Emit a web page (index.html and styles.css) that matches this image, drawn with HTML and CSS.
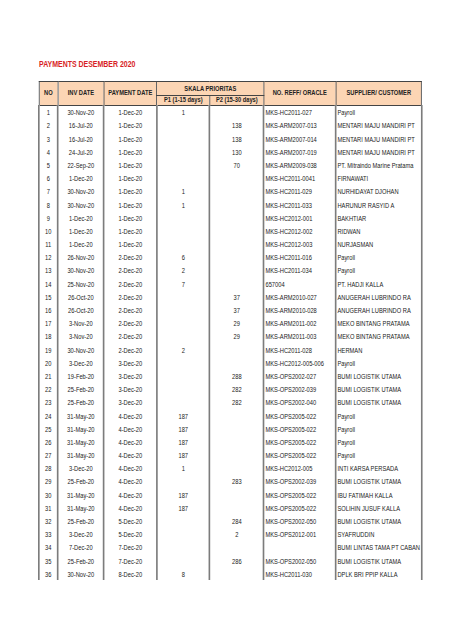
FILE: index.html
```html
<!DOCTYPE html>
<html>
<head>
<meta charset="utf-8">
<link rel="stylesheet" href="styles.css">
</head>
<body>
<div class="page">
  <h1 class="title">PAYMENTS DESEMBER 2020</h1>
  <table class="sheet">
    <colgroup>
      <col class="c-no"><col class="c-inv"><col class="c-pay"><col class="c-p1"><col class="c-p2"><col class="c-ref"><col class="c-sup">
    </colgroup>
    <thead>
      <tr class="h1">
        <th rowspan="2">NO</th>
        <th rowspan="2">INV DATE</th>
        <th rowspan="2">PAYMENT DATE</th>
        <th colspan="2">SKALA PRIORITAS</th>
        <th rowspan="2">NO. REFF/ ORACLE</th>
        <th rowspan="2">SUPPLIER/ CUSTOMER</th>
      </tr>
      <tr class="h2">
        <th>P1 (1-15 days)</th>
        <th>P2 (15-30 days)</th>
      </tr>
    </thead>
    <tbody>
      <tr><td>1</td><td>30-Nov-20</td><td>1-Dec-20</td><td>1</td><td></td><td class="l">MKS-HC2011-027</td><td class="l">Payroll</td></tr>
      <tr><td>2</td><td>16-Jul-20</td><td>1-Dec-20</td><td></td><td>138</td><td class="l">MKS-ARM2007-013</td><td class="l">MENTARI MAJU MANDIRI PT</td></tr>
      <tr><td>3</td><td>16-Jul-20</td><td>1-Dec-20</td><td></td><td>138</td><td class="l">MKS-ARM2007-014</td><td class="l">MENTARI MAJU MANDIRI PT</td></tr>
      <tr><td>4</td><td>24-Jul-20</td><td>1-Dec-20</td><td></td><td>130</td><td class="l">MKS-ARM2007-019</td><td class="l">MENTARI MAJU MANDIRI PT</td></tr>
      <tr><td>5</td><td>22-Sep-20</td><td>1-Dec-20</td><td></td><td>70</td><td class="l">MKS-ARM2009-038</td><td class="l">PT. Mitraindo Marine Pratama</td></tr>
      <tr><td>6</td><td>1-Dec-20</td><td>1-Dec-20</td><td></td><td></td><td class="l">MKS-HC2011-0041</td><td class="l">FIRNAWATI</td></tr>
      <tr><td>7</td><td>30-Nov-20</td><td>1-Dec-20</td><td>1</td><td></td><td class="l">MKS-HC2011-029</td><td class="l">NURHIDAYAT DJOHAN</td></tr>
      <tr><td>8</td><td>30-Nov-20</td><td>1-Dec-20</td><td>1</td><td></td><td class="l">MKS-HC2011-033</td><td class="l">HARUNUR RASYID A</td></tr>
      <tr><td>9</td><td>1-Dec-20</td><td>1-Dec-20</td><td></td><td></td><td class="l">MKS-HC2012-001</td><td class="l">BAKHTIAR</td></tr>
      <tr><td>10</td><td>1-Dec-20</td><td>1-Dec-20</td><td></td><td></td><td class="l">MKS-HC2012-002</td><td class="l">RIDWAN</td></tr>
      <tr><td>11</td><td>1-Dec-20</td><td>1-Dec-20</td><td></td><td></td><td class="l">MKS-HC2012-003</td><td class="l">NURJASMAN</td></tr>
      <tr><td>12</td><td>26-Nov-20</td><td>2-Dec-20</td><td>6</td><td></td><td class="l">MKS-HC2011-016</td><td class="l">Payroll</td></tr>
      <tr><td>13</td><td>30-Nov-20</td><td>2-Dec-20</td><td>2</td><td></td><td class="l">MKS-HC2011-034</td><td class="l">Payroll</td></tr>
      <tr><td>14</td><td>25-Nov-20</td><td>2-Dec-20</td><td>7</td><td></td><td class="l">657004</td><td class="l">PT. HADJI KALLA</td></tr>
      <tr><td>15</td><td>26-Oct-20</td><td>2-Dec-20</td><td></td><td>37</td><td class="l">MKS-ARM2010-027</td><td class="l">ANUGERAH LUBRINDO RA</td></tr>
      <tr><td>16</td><td>26-Oct-20</td><td>2-Dec-20</td><td></td><td>37</td><td class="l">MKS-ARM2010-028</td><td class="l">ANUGERAH LUBRINDO RA</td></tr>
      <tr><td>17</td><td>3-Nov-20</td><td>2-Dec-20</td><td></td><td>29</td><td class="l">MKS-ARM2011-002</td><td class="l">MEKO BINTANG PRATAMA</td></tr>
      <tr><td>18</td><td>3-Nov-20</td><td>2-Dec-20</td><td></td><td>29</td><td class="l">MKS-ARM2011-003</td><td class="l">MEKO BINTANG PRATAMA</td></tr>
      <tr><td>19</td><td>30-Nov-20</td><td>2-Dec-20</td><td>2</td><td></td><td class="l">MKS-HC2011-028</td><td class="l">HERMAN</td></tr>
      <tr><td>20</td><td>3-Dec-20</td><td>3-Dec-20</td><td></td><td></td><td class="l">MKS-HC2012-005-006</td><td class="l">Payroll</td></tr>
      <tr><td>21</td><td>19-Feb-20</td><td>3-Dec-20</td><td></td><td>288</td><td class="l">MKS-OPS2002-027</td><td class="l">BUMI LOGISTIK UTAMA</td></tr>
      <tr><td>22</td><td>25-Feb-20</td><td>3-Dec-20</td><td></td><td>282</td><td class="l">MKS-OPS2002-039</td><td class="l">BUMI LOGISTIK UTAMA</td></tr>
      <tr><td>23</td><td>25-Feb-20</td><td>3-Dec-20</td><td></td><td>282</td><td class="l">MKS-OPS2002-040</td><td class="l">BUMI LOGISTIK UTAMA</td></tr>
      <tr><td>24</td><td>31-May-20</td><td>4-Dec-20</td><td>187</td><td></td><td class="l">MKS-OPS2005-022</td><td class="l">Payroll</td></tr>
      <tr><td>25</td><td>31-May-20</td><td>4-Dec-20</td><td>187</td><td></td><td class="l">MKS-OPS2005-022</td><td class="l">Payroll</td></tr>
      <tr><td>26</td><td>31-May-20</td><td>4-Dec-20</td><td>187</td><td></td><td class="l">MKS-OPS2005-022</td><td class="l">Payroll</td></tr>
      <tr><td>27</td><td>31-May-20</td><td>4-Dec-20</td><td>187</td><td></td><td class="l">MKS-OPS2005-022</td><td class="l">Payroll</td></tr>
      <tr><td>28</td><td>3-Dec-20</td><td>4-Dec-20</td><td>1</td><td></td><td class="l">MKS-HC2012-005</td><td class="l">INTI KARSA PERSADA</td></tr>
      <tr><td>29</td><td>25-Feb-20</td><td>4-Dec-20</td><td></td><td>283</td><td class="l">MKS-OPS2002-039</td><td class="l">BUMI LOGISTIK UTAMA</td></tr>
      <tr><td>30</td><td>31-May-20</td><td>4-Dec-20</td><td>187</td><td></td><td class="l">MKS-OPS2005-022</td><td class="l">IBU FATIMAH KALLA</td></tr>
      <tr><td>31</td><td>31-May-20</td><td>4-Dec-20</td><td>187</td><td></td><td class="l">MKS-OPS2005-022</td><td class="l">SOLIHIN JUSUF KALLA</td></tr>
      <tr><td>32</td><td>25-Feb-20</td><td>5-Dec-20</td><td></td><td>284</td><td class="l">MKS-OPS2002-050</td><td class="l">BUMI LOGISTIK UTAMA</td></tr>
      <tr><td>33</td><td>3-Dec-20</td><td>5-Dec-20</td><td></td><td>2</td><td class="l">MKS-OPS2012-001</td><td class="l">SYAFRUDDIN</td></tr>
      <tr><td>34</td><td>7-Dec-20</td><td>7-Dec-20</td><td></td><td></td><td class="l"></td><td class="l">BUMI LINTAS TAMA PT CABAN</td></tr>
      <tr><td>35</td><td>25-Feb-20</td><td>7-Dec-20</td><td></td><td>286</td><td class="l">MKS-OPS2002-050</td><td class="l">BUMI LOGISTIK UTAMA</td></tr>
      <tr><td>36</td><td>30-Nov-20</td><td>8-Dec-20</td><td>8</td><td></td><td class="l">MKS-HC2011-030</td><td class="l">DPLK BRI PPIP KALLA</td></tr>
    </tbody>
  </table>
</div>
</body>
</html>
```

FILE: styles.css
```css
html, body {
  margin: 0;
  padding: 0;
  background: #ffffff;
  overflow: hidden;
}
.page {
  padding: 59px 0 0 38px;
  font-family: "Liberation Sans", Arial, sans-serif;
  color: #222222;
}
/* the source uses a narrow face (Arial Narrow); emulate by horizontal scaling */
.title {
  margin: 0 0 12px 1px;
  font-size: 8.5px;
  line-height: 10px;
  font-weight: bold;
  color: #d81e25;
  transform: scaleX(0.82);
  transform-origin: 0 0;
  white-space: nowrap;
}
.sheet {
  border-collapse: collapse;
  table-layout: fixed;
  width: 467px;
  transform: scaleX(0.82);
  transform-origin: 0 0;
}
.c-no { width: 23.2px; }
.c-inv { width: 56.1px; }
.c-pay { width: 64.6px; }
.c-p1 { width: 64.6px; }
.c-p2 { width: 65.9px; }
.c-ref { width: 87.8px; }
.c-sup { width: 104.8px; }
.sheet th {
  background: #fcd5b4;
  border: 1px solid #444444;
  font-size: 7px;
  line-height: 8px;
  font-weight: bold;
  padding: 0;
  text-align: center;
  vertical-align: middle;
  white-space: nowrap;
  overflow: hidden;
}
.h1 { height: 14px; }
.h2 { height: 9.5px; }
.sheet tbody tr { height: 13.19px; }
.sheet td {
  border-left: 2px solid #7c7c7c;
  border-right: 2px solid #7c7c7c;
  font-size: 7px;
  line-height: 8px;
  padding: 0 0 1px 0;
  text-align: center;
  vertical-align: bottom;
  white-space: nowrap;
  overflow: hidden;
}
.sheet td.l {
  text-align: left;
  padding-left: 1px;
}
```
